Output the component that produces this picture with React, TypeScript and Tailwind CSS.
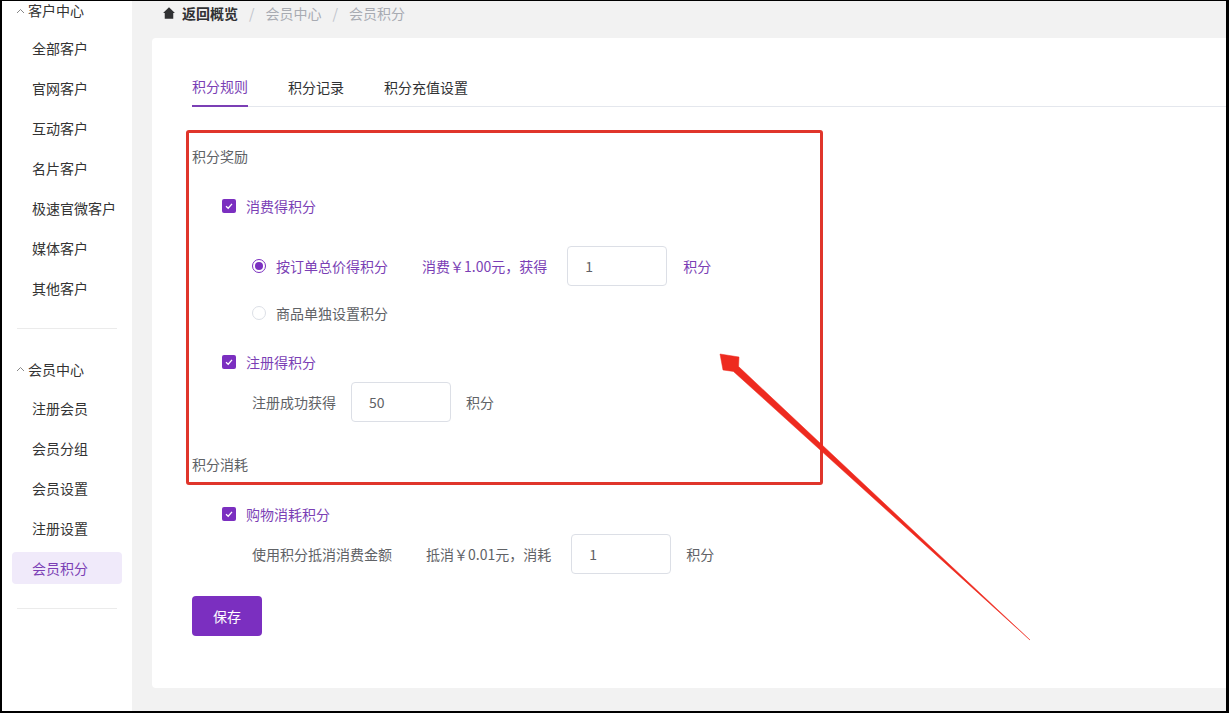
// 会员积分 - 积分规则页面
import React from "react";

function Checkbox() {
  return (
    <span className="w-[14px] h-[14px] rounded-[2px] bg-[#7b2fc0] flex items-center justify-center shrink-0">
      <svg width="10" height="10" viewBox="0 0 10 10">
        <polyline points="2,5.2 4.2,7.2 8,2.8" fill="none" stroke="white" strokeWidth="1.3" />
      </svg>
    </span>
  );
}

function Radio({ checked }: { checked?: boolean }) {
  return checked ? (
    <span className="w-[14px] h-[14px] rounded-full border border-[#7b2fc0] flex items-center justify-center shrink-0">
      <span className="w-[8px] h-[8px] rounded-full bg-[#7b2fc0]" />
    </span>
  ) : (
    <span className="w-[14px] h-[14px] rounded-full border border-[#dcdfe6] bg-white shrink-0" />
  );
}

function NumInput({ value }: { value: string }) {
  return (
    <div className="w-[100px] h-10 border border-[#dcdfe6] rounded-[4px] flex items-center px-[17px] text-[#606266]">
      {value}
    </div>
  );
}

function SideItem({ label, active }: { label: string; active?: boolean }) {
  return (
    <div className="h-10 flex items-center">
      <div
        className={
          active
            ? "mx-[10px] w-[110px] h-8 rounded-[4px] bg-[#f0eafa] text-[#7b3fb5] flex items-center pl-5"
            : "mx-[10px] w-[110px] h-8 text-[#333] flex items-center pl-5"
        }
      >
        {label}
      </div>
    </div>
  );
}

function SideHeader({ label, className }: { label: string; className: string }) {
  return (
    <div className={"flex items-center pl-[14px] text-[#333] " + className}>
      <svg width="9" height="6" viewBox="0 0 9 6" className="mr-[3px]">
        <polyline points="1,5 4.5,1.5 8,5" fill="none" stroke="#888" strokeWidth="1" />
      </svg>
      {label}
    </div>
  );
}

export default function App() {
  const customers = ["全部客户", "官网客户", "互动客户", "名片客户", "极速官微客户", "媒体客户", "其他客户"];
  const members = ["注册会员", "会员分组", "会员设置", "注册设置"];

  return (
    <div className="relative w-[1229px] h-[713px] bg-black pt-px pl-[2px] pr-[3px] pb-[2px] font-['Noto_Sans_CJK_SC',sans-serif] text-[14px]">
      <div className="flex w-full h-full overflow-hidden bg-[#f2f2f2]">
        {/* 侧边栏 */}
        <aside className="w-[130px] h-full bg-white shrink-0 flex flex-col">
          <SideHeader label="客户中心" className="h-[19px]" />
          <div className="mt-[8px]">
            {customers.map((c) => (
              <SideItem key={c} label={c} />
            ))}
          </div>
          <div className="mt-[20px] mx-[15px] h-px bg-[#ebebeb]" />
          <SideHeader label="会员中心" className="mt-[21px] h-[38px]" />
          <div>
            {members.map((c) => (
              <SideItem key={c} label={c} />
            ))}
            <SideItem label="会员积分" active />
          </div>
          <div className="mt-[20px] mx-[15px] h-px bg-[#ebebeb]" />
        </aside>

        {/* 主区域 */}
        <main className="flex-1 flex flex-col pl-5 pb-[23px]">
          <div className="h-6 flex items-center pl-[11px]">
            <svg width="12" height="12" viewBox="0 0 11 11" className="mr-[7px]">
              <path d="M5.5 0.3 L10.9 5.4 L9.4 5.4 L9.4 10.8 L1.6 10.8 L1.6 5.4 L0.1 5.4 Z" fill="#303133" />
            </svg>
            <span className="font-bold text-[#303133]">返回概览</span>
            <span className="mx-[11px] text-[#c0c4cc]">/</span>
            <span className="text-[#a8abb2]">会员中心</span>
            <span className="mx-[11px] text-[#c0c4cc]">/</span>
            <span className="text-[#a8abb2]">会员积分</span>
          </div>

          <div className="relative mt-[13px] flex-1 bg-white rounded-l-[4px] pl-10 pt-[29px]">
            {/* 标签页 */}
            <div className="flex border-b border-[#e4e7ed] h-10">
              <div className="h-10 flex items-center text-[#7b3fb5] border-b-2 border-[#7b3fb5] mr-10">积分规则</div>
              <div className="h-10 flex items-center text-[#303133] mr-10">积分记录</div>
              <div className="h-10 flex items-center text-[#303133]">积分充值设置</div>
            </div>

            <div className="flex flex-col mt-[29px] text-[#606266]">
              <div className="h-10 flex items-center">积分奖励</div>

              <div className="h-10 flex items-center mt-[10px] pl-[30px] gap-[10px]">
                <Checkbox />
                <span className="text-[#7b3fb5]">消费得积分</span>
              </div>

              <div className="h-10 flex items-center mt-[20px] pl-[60px]">
                <Radio checked />
                <span className="ml-[10px] text-[#7b3fb5]">按订单总价得积分</span>
                <span className="ml-[34px] mr-[20px] text-[#7b3fb5]">消费￥1.00元，获得</span>
                <NumInput value="1" />
                <span className="ml-[16px] text-[#7b3fb5]">积分</span>
              </div>

              <div className="h-10 flex items-center mt-[7px] pl-[60px]">
                <Radio />
                <span className="ml-[10px]">商品单独设置积分</span>
              </div>

              <div className="h-10 flex items-center mt-[9px] pl-[30px] gap-[10px]">
                <Checkbox />
                <span className="text-[#7b3fb5]">注册得积分</span>
              </div>

              <div className="h-10 flex items-center pl-[60px]">
                <span className="mr-[15px]">注册成功获得</span>
                <NumInput value="50" />
                <span className="ml-[15px]">积分</span>
              </div>

              <div className="h-10 flex items-center mt-[22px]">积分消耗</div>

              <div className="h-10 flex items-center mt-[10px] pl-[30px] gap-[10px]">
                <Checkbox />
                <span className="text-[#7b3fb5]">购物消耗积分</span>
              </div>

              <div className="h-10 flex items-center pl-[60px]">
                <span>使用积分抵消消费金额</span>
                <span className="ml-[34px] mr-[20px]">抵消￥0.01元，消耗</span>
                <NumInput value="1" />
                <span className="ml-[15px]">积分</span>
              </div>

              <div className="mt-[22px]">
                <button className="w-[70px] h-10 rounded-[4px] bg-[#7b2fc0] text-white">保存</button>
              </div>
            </div>

            {/* 标注红框 */}
            <div className="absolute left-[34px] top-[92px] w-[637px] h-[355px] border-[3px] border-[#e0352b] rounded-[3px] pointer-events-none" />
          </div>
        </main>
      </div>

      {/* 标注箭头 */}
      <svg className="absolute left-0 top-0 pointer-events-none" width="1229" height="713" viewBox="0 0 1229 713">
        <polygon
          points="720,354 739,357 738.6,366.6 1030,640 733.4,371.4 723,370"
          fill="#ee2a1f"
          stroke="#ee2a1f"
          strokeWidth="0.5"
          strokeLinejoin="round"
        />
      </svg>
    </div>
  );
}
